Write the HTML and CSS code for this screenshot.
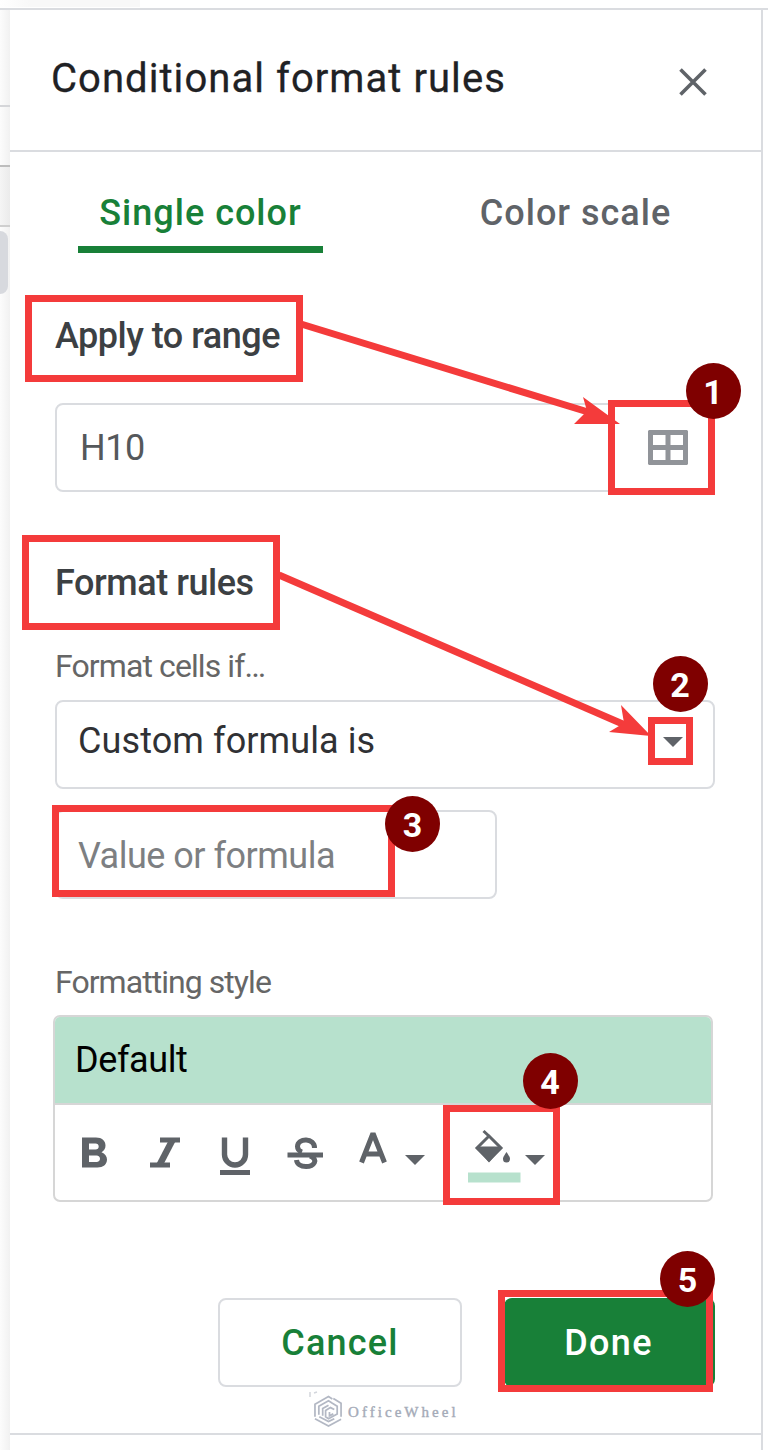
FILE: index.html
```html
<!DOCTYPE html>
<html lang="en">
<head>
<meta charset="utf-8">
<title>Conditional format rules</title>
<link rel="stylesheet" href="styles.css">
</head>
<body>
<div class="screen">
  <div class="topbar"><div class="topbar-shade"></div></div>
  <div class="workspace">
    <div class="sheet-edge">
      <div class="edge-toolbar"></div>
      <div class="edge-formula"></div>
      <div class="edge-column"></div>
      <div class="edge-scroll"></div>
    </div>
    <main class="panel">
      <header class="panel-header">
        <h1 class="title"><span>Conditional format rules</span></h1>
        <svg class="close" viewBox="0 0 28 28"><path d="M1.5 1.5L26.5 26.5M26.5 1.5L1.5 26.5" stroke="#5f6368" stroke-width="3.6" fill="none"/></svg>
      </header>
      <nav class="tabs">
        <div class="tab tab-active"><span>Single color</span></div>
        <div class="tab tab-scale"><span>Color scale</span></div>
      </nav>
      <section class="form">
        <h2 class="heading heading-range"><span>Apply to range</span></h2>
        <div class="field field-range">
          <span>H10</span>
          <svg class="grid-icon" viewBox="0 0 40 35"><path fill="#919499" fill-rule="evenodd" d="M1 0H39L40 1V34L39 35H1L0 34V1ZM5 5V15H17.5V5ZM22.5 5V15H35V5ZM5 20V30H17.5V20ZM22.5 20V30H35V20Z"/></svg>
        </div>
        <h2 class="heading heading-rules"><span>Format rules</span></h2>
        <div class="label label-if"><span>Format cells if…</span></div>
        <div class="field field-select">
          <span>Custom formula is</span>
          <svg class="caret" viewBox="0 0 20 10"><path d="M0 0H20L10 10Z" fill="#5f6368"/></svg>
        </div>
        <div class="field field-value"><span>Value or formula</span></div>
        <div class="label label-style"><span>Formatting style</span></div>
        <div class="style-box">
          <div class="preview"><span>Default</span></div>
          <div class="format-bar">
            <svg class="fmt-icons" viewBox="0 0 480 94">
              <path fill="#5f6368" fill-rule="evenodd" d="M27 32.500H41C47 32.500 50.500 36 50.500 40.500C50.500 43.500 49 46 46.500 47.200C50 48.500 52 51.200 52 54.500C52 59.500 48 62.500 42.500 62.500H27ZM34 38.500V44.500H40.500C42.500 44.500 43.700 43.300 43.700 41.500C43.700 39.700 42.500 38.500 40.500 38.500ZM34 50.500V57H41.500C43.700 57 45 55.800 45 53.800C45 51.800 43.700 50.500 41.500 50.500Z"/>
              <g fill="none" stroke="#5f6368">
                <path stroke-width="5" d="M105 35H125M95 60H115"/>
                <path stroke-width="6.500" d="M117.500 35L104.500 60"/>
                <path stroke-width="5.400" d="M169.500 32.500V49.500a10.500 10.500 0 0 0 21 0V32.500"/>
                <path stroke-width="5" d="M165 67.500H195"/>
                <path stroke-width="5" d="M259.500 43C260 32.500 242.500 32.500 242.500 41.500C242.500 44.500 244 46 247 47M255 51C264 54.500 259 61.500 251 61.500C245.500 61.500 242 59 241.500 55"/>
                <path stroke-width="5" d="M232.500 50H268"/>
                <path stroke-width="5" d="M306.500 57.500L317.300 30H318.700L329.500 57.500M310 49H326"/>
              </g>
              <path fill="#5f6368" d="M350 50H370L360 60Z"/>
            </svg>
          </div>
        </div>
        <div class="actions">
          <button class="btn btn-cancel"><span>Cancel</span></button>
          <button class="btn btn-done"><span>Done</span></button>
        </div>
      </section>
      <footer class="brand">
        <svg class="brand-mark" viewBox="0 0 30 32"><path fill="none" stroke="#b3b8c4" stroke-width="1.800" d="M1 22V9L15 1L19 3.500M5 20V11L15 5.500L19 8M9 21V13.500L15 10M1 24L15 31.500L28 24.500M5.500 22L15 27L21 24M20 3L28 8V22M19 8L24 11V19L15 24L12 22V15.500L17 12.500L21 14.500M20 19L16 21V17"/></svg>
        <span>OfficeWheel</span>
      </footer>
    </main>
    <div class="right-edge"></div>
  </div>

  <div class="annotations">
    <svg class="arrows" viewBox="0 0 768 1450">
      <g stroke="#f43b3b" stroke-width="7"><path d="M301 324L588 412"/><path d="M279 575L625 725"/></g>
      <g fill="#f43b3b"><path d="M620 424L583 397L587 411L574 424Z"/><path d="M651 736L621 705L624 723L609 732Z"/></g>
      <path fill="#5f6368" d="M525 1155H545L535 1165Z"/>
      <path d="M483.500 1131L490 1137M489 1136L501 1148L489 1160L477 1148Z" fill="none" stroke="#5f6368" stroke-width="3"/>
      <path d="M476 1148L478 1146.500H500L502 1148L489 1162.500Z" fill="#5f6368"/>
      <path d="M506.500 1152C509 1156 510 1157 510 1159a3.500 3.500 0 0 1-7 0C503 1157 504 1156 506.500 1152Z" fill="#5f6368"/>
      <path d="M468 1172.500H520.500V1182.500H468Z" fill="#b7e1cd"/>
      <path d="M310 1392V1397M314 1393L317 1392" stroke="#d3d6dc" stroke-width="1.500"/>
    </svg>
    <div class="mark mark-range"></div>
    <div class="mark mark-grid"></div>
    <div class="mark mark-rules"></div>
    <div class="mark mark-caret"></div>
    <div class="mark mark-value"></div>
    <div class="mark mark-fill"></div>
    <div class="mark mark-done"></div>
    <div class="badge badge-1">1</div>
    <div class="badge badge-2">2</div>
    <div class="badge badge-3">3</div>
    <div class="badge badge-4">4</div>
    <div class="badge badge-5">5</div>
  </div>
</div>
</body>
</html>
```
FILE: styles.css
```css
* { box-sizing: border-box; }
body { margin: 0; background: #fff; font-family: Roboto, "Liberation Sans", sans-serif; }
h1, h2 { margin: 0; font-weight: 400; }
span { white-space: nowrap; }
svg { display: block; }
.screen { position: relative; width: 768px; height: 1450px; overflow: hidden; display: flex; flex-direction: column; }
.topbar { height: 10px; border-bottom: 2px solid #dadce0; }
.topbar-shade { width: 140px; height: 7px; background: linear-gradient(90deg, #fff, #f8f8f8 30px); }
.workspace { display: flex; height: 1440px; }
.sheet-edge { width: 10px; background: linear-gradient(90deg, #fcfcfc, #f1f1f1); display: flex; flex-direction: column; }
.edge-toolbar { height: 97px; border-bottom: 2px solid #d5d6d9; }
.edge-formula { height: 60px; border-bottom: 2px solid #bdbdbd; }
.edge-column { height: 60px; border-bottom: 2px solid #cfcfcf; background: linear-gradient(90deg, #f5f5f5, #ebebeb); }
.edge-scroll { margin-top: 4px; width: 8px; height: 63px; background: #d7d9de; border-radius: 0 8px 8px 0; }
.panel { width: 751px; background: #fff; }
.right-edge { width: 7px; border-left: 2px solid #dadce0; }

.panel-header { height: 142px; border-bottom: 2px solid #dadce0; display: flex; justify-content: space-between; padding: 44px 54px 0 41px; }
.title { font-size: 40px; line-height: 50px; letter-spacing: 1.05px; color: #202124; height: 50px; -webkit-text-stroke: .3px #202124; }
.close { width: 28px; height: 28px; margin-top: 14px; }
.tabs { display: flex; justify-content: space-between; height: 101px; padding: 0 68px; }
.tab { width: 245px; height: 101px; padding-top: 39px; text-align: center; font-size: 36px; line-height: 45px; font-weight: 500; letter-spacing: 1px; color: #5f6368; }
.tab-active { color: #188038; border-bottom: 7px solid #188038; border-radius: 3px 3px 0 0; }
.tab-scale { padding-left: 10px; }

.form { padding-left: 45px; }
.heading { font-size: 36px; line-height: 44px; font-weight: 500; color: #3c4043; }
.heading-range { height: 150px; padding-top: 61px; letter-spacing: -.5px; }
.field { border: 2px solid #dadce0; border-radius: 8px; height: 89px; width: 660px; font-size: 36px; line-height: 44px; display: flex; justify-content: space-between; }
.field-range { padding: 21px 25px 0 23px; color: #55585b; letter-spacing: -.5px; }
.grid-icon { width: 40px; height: 35px; margin-top: 4px; }
.heading-rules { height: 152px; padding-top: 69px; letter-spacing: -.45px; }
.label { font-size: 32px; line-height: 40px; color: #666; }
.label-if { height: 56px; padding-top: 2px; letter-spacing: -.9px; }
.field-select { padding: 17px 30px 0 21px; color: #303134; letter-spacing: .1px; }
.caret { width: 20px; height: 10px; margin-top: 18px; }
.field-value { width: 442px; margin-top: 21px; padding: 22px 0 0 21px; color: #7d7f82; letter-spacing: -.5px; }
.label-style { padding-top: 63px; height: 116px; letter-spacing: -.95px; }
.style-box { margin-left: -2px; width: 660px; height: 187px; border: 2px solid #d6d6d6; border-radius: 7px; overflow: hidden; }
.preview { height: 88px; background: #b7e1cd; border-bottom: 2px solid #d6d6d6; padding: 21px 0 0 20px; font-size: 36px; line-height: 44px; letter-spacing: -.4px; color: #000; }
.format-bar { height: 95px; }
.fmt-icons { width: 480px; height: 94px; }
.actions { display: flex; gap: 42px; margin-top: 96px; padding-left: 163px; }
.btn { height: 89px; border: 0; border-radius: 8px; font: 500 36px/44px Roboto, sans-serif; padding: 0; }
.btn-cancel { width: 244px; border: 2px solid #dadce0; background: #fff; color: #188038; letter-spacing: 1.2px; }
.btn-done { width: 211px; background: #188038; color: #fff; letter-spacing: 1.3px; padding: 1px 2px 0 0; }
.brand { height: 48px; border-bottom: 2px solid #dadce0; padding: 8px 0 0 304px; display: flex; gap: 5px; color: #a5abb8; font: 400 15px/34px "Liberation Serif", serif; letter-spacing: 3.05px; -webkit-text-stroke: .4px #a5abb8; }
.brand-mark { width: 29px; height: 32px; }

.annotations { position: absolute; inset: 0; }
.arrows { position: absolute; inset: 0; width: 768px; height: 1450px; }
.mark { position: absolute; border: 7px solid #f43b3b; }
.mark-range { left: 25px; top: 295px; width: 278px; height: 87px; }
.mark-grid { left: 608px; top: 400px; width: 107px; height: 95px; }
.mark-rules { left: 22px; top: 535px; width: 258px; height: 95px; }
.mark-caret { left: 648px; top: 717px; width: 45px; height: 48px; }
.mark-value { left: 52px; top: 805px; width: 343px; height: 92px; }
.mark-fill { left: 443px; top: 1105px; width: 117px; height: 100px; }
.mark-done { left: 498px; top: 1290px; width: 215px; height: 102px; }
.badge { position: absolute; width: 55px; height: 56px; border-radius: 50%; background: #7f0000; color: #fff; text-align: center; font: 700 34px/59px "DejaVu Sans Condensed", Roboto, sans-serif; font-family: Roboto, sans-serif; }
.badge-1 { left: 685.500px; top: 363px; }
.badge-2 { left: 652.500px; top: 656px; }
.badge-3 { left: 385px; top: 796px; }
.badge-4 { left: 522.500px; top: 1053px; }
.badge-5 { left: 660px; top: 1251px; }
```
